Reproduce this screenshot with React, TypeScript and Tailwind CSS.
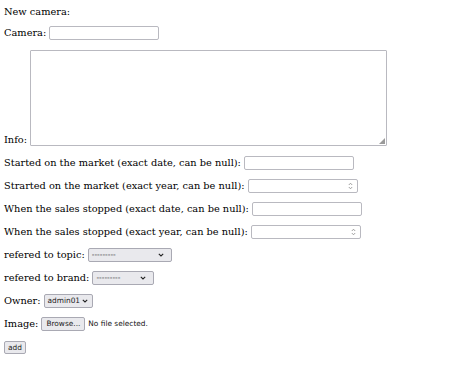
import React from "react";

const serif = "font-['DejaVu_Serif',serif]";
const sans = "font-['DejaVu_Sans',sans-serif]";

function TextBox({ w }: { w: string }) {
  return (
    <input
      type="text"
      className={`${w} h-[14px] border border-[#b9b9c0] rounded-[2px] bg-white outline-none`}
    />
  );
}

function NumberBox({ w }: { w: string }) {
  return (
    <div className={`${w} h-[14px] border border-[#b9b9c0] rounded-[2px] bg-white flex items-center justify-end pr-[4px]`}>
      <svg width="5" height="8" viewBox="0 0 5 8" fill="none" stroke="#8a8a8a" strokeWidth="0.8">
        <path d="M0.8 3 L2.5 1.2 L4.2 3" />
        <path d="M0.8 5 L2.5 6.8 L4.2 5" />
      </svg>
    </div>
  );
}

function Chevron() {
  return (
    <svg width="6" height="4" viewBox="0 0 6 4" fill="none" stroke="#222" strokeWidth="1.1">
      <path d="M0.8 0.8 L3 3 L5.2 0.8" />
    </svg>
  );
}

function Select({ w, text, pad = "pr-[7px]" }: { w: string; text: string; pad?: string }) {
  return (
    <div className={`${w} h-[14px] border border-[#a9a9b3] rounded-[2px] bg-[#e9e9ed] flex items-center justify-between pl-[3px] ${pad}`}>
      <span className={`${sans} text-[7.4px] leading-none text-[#222]`}>{text}</span>
      <Chevron />
    </div>
  );
}

export default function App() {
  return (
    <div className={`w-[474px] h-[372px] bg-white text-black ${serif} text-[9.8px] leading-none flex flex-col px-[4px]`}>
      <div className="mt-[5px] h-[14px] flex items-center">New camera:</div>

      <div className="mt-[7px] h-[14px] flex items-center gap-[3px]">
        <span>Camera:</span>
        <TextBox w="w-[110px]" />
      </div>

      <div className="mt-[10px] flex items-end gap-[3px]">
        <span className="mb-[1px]">Info:</span>
        <div className="relative w-[357px] h-[96px]">
          <textarea className="w-full h-full border border-[#b9b9c0] rounded-[1px] bg-white resize-none outline-none" />
          <svg className="absolute right-[2px] bottom-[2px]" width="6" height="6" viewBox="0 0 6 6">
            <path d="M6 0 L6 6 L0 6 Z" fill="#9a9a9a" />
          </svg>
        </div>
      </div>

      <div className="mt-[10px] h-[14px] flex items-center gap-[3px]">
        <span>Started on the market (exact date, can be null):</span>
        <TextBox w="w-[110px]" />
      </div>

      <div className="mt-[9px] h-[14px] flex items-center gap-[3px]">
        <span>Strarted on the market (exact year, can be null):</span>
        <NumberBox w="w-[110px]" />
      </div>

      <div className="mt-[9px] h-[14px] flex items-center gap-[3px]">
        <span>When the sales stopped (exact date, can be null):</span>
        <TextBox w="w-[110px]" />
      </div>

      <div className="mt-[9px] h-[14px] flex items-center gap-[3px]">
        <span>When the sales stopped (exact year, can be null):</span>
        <NumberBox w="w-[110px]" />
      </div>

      <div className="mt-[9px] h-[14px] flex items-center gap-[3px]">
        <span>refered to topic:</span>
        <Select w="w-[84px]" text="---------" />
      </div>

      <div className="mt-[9px] h-[14px] flex items-center gap-[3px]">
        <span>refered to brand:</span>
        <Select w="w-[62px]" text="---------" />
      </div>

      <div className="mt-[9px] h-[14px] flex items-center gap-[3px]">
        <span>Owner:</span>
        <Select w="w-[49px]" text="admin01" pad="pr-[4px]" />
      </div>

      <div className="mt-[9px] h-[14px] flex items-center gap-[3px]">
        <span>Image:</span>
        <button className={`h-[14px] px-[4px] border border-[#a9a9b3] rounded-[2px] bg-[#e9e9ed] ${sans} text-[7.4px] leading-none text-[#222]`}>
          Browse...
        </button>
        <span className={`${sans} text-[7.4px] leading-none text-[#111]`}>No file selected.</span>
      </div>

      <div className="mt-[10px] h-[13px] flex items-center">
        <button className={`h-[13px] px-[3px] border border-[#a9a9b3] rounded-[2px] bg-[#e9e9ed] ${sans} text-[7.4px] leading-none text-[#222]`}>
          add
        </button>
      </div>
    </div>
  );
}
